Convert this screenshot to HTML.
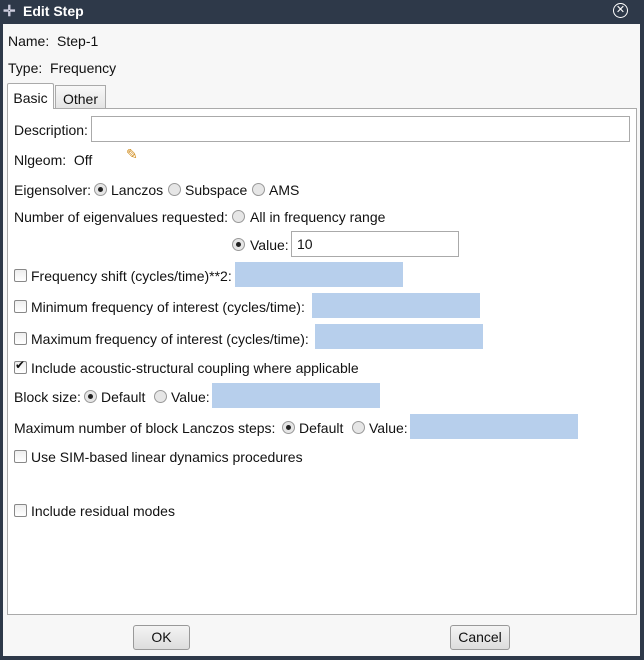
<!DOCTYPE html>
<html><head><style>
body{margin:0;width:644px;height:660px;background:#2e3949;font-family:"Liberation Sans",sans-serif;font-size:14px;color:#111;position:relative;overflow:hidden}
.a{position:absolute;white-space:nowrap}
#win{position:absolute;left:3px;top:24px;width:637px;height:632px;background:#f7f7f7}
.f{position:absolute;background:#b7cfec;height:25px}
.cb{position:absolute;width:11px;height:11px;border:1px solid #888;background:linear-gradient(#eee,#fff);border-radius:2px}
.rb{position:absolute;width:11px;height:11px;border:1px solid #999;border-radius:50%;background:#e6e6e6}
.rb.on::after{content:"";position:absolute;left:3px;top:3px;width:5px;height:5px;border-radius:50%;background:#222}
.btn{position:absolute;height:23px;border:1px solid #999;border-radius:3px;background:linear-gradient(#f4f4f4,#ddd);text-align:center;line-height:23px;font-size:14px}
</style></head><body>
<div class="a" style="left:3px;top:2px;color:#ccd;font-size:15px;font-weight:bold">✛</div>
<div class="a" style="left:23px;top:3px;color:#fff;font-size:14px;font-weight:bold">Edit Step</div>
<div class="a" style="left:613px;top:3px;width:13px;height:13px;border:1.5px solid #fff;border-radius:50%;color:#fff;font-size:11px;line-height:13px;text-align:center">✕</div>
<div id="win"></div>
<div class="a" style="left:8px;top:33px">Name:&nbsp; Step-1</div>
<div class="a" style="left:8px;top:60px">Type:&nbsp; Frequency</div>
<div class="a" style="left:7px;top:108px;width:628px;height:505px;background:#fff;border:1px solid #aaa"></div>
<div class="a" style="left:7px;top:83px;width:47px;height:26px;background:#fff;border:1px solid #aaa;border-bottom:none;border-radius:2px 2px 0 0;padding:6px 0 0 0;box-sizing:border-box;text-align:center">Basic</div>
<div class="a" style="left:55px;top:85px;width:51px;height:23px;background:linear-gradient(#f8f8f8,#e4e4e4);border:1px solid #aaa;border-bottom:none;box-sizing:border-box;padding-top:5px;text-align:center">Other</div>
<div class="a" style="left:14px;top:122px">Description:</div>
<div class="a" style="left:91px;top:116px;width:537px;height:24px;border:1px solid #aaa;background:#fff"></div>
<div class="a" style="left:14px;top:152px">Nlgeom:&nbsp; Off</div>
<div class="a" style="left:126px;top:146px;color:#d08b1a;font-size:14px">✎</div>
<div class="a" style="left:14px;top:182px">Eigensolver:</div>
<div class="rb on" style="left:94px;top:183px"></div><div class="a" style="left:111px;top:182px">Lanczos</div>
<div class="rb" style="left:168px;top:183px"></div><div class="a" style="left:185px;top:182px">Subspace</div>
<div class="rb" style="left:252px;top:183px"></div><div class="a" style="left:269px;top:182px">AMS</div>
<div class="a" style="left:14px;top:209px">Number of eigenvalues requested:</div>
<div class="rb" style="left:232px;top:210px"></div><div class="a" style="left:250px;top:209px">All in frequency range</div>
<div class="rb on" style="left:232px;top:238px"></div><div class="a" style="left:250px;top:237px">Value:</div>
<div class="a" style="left:291px;top:231px;width:168px;height:26px;border:1px solid #aaa;background:#fff;line-height:25px;padding-left:5px;box-sizing:border-box">10</div>
<div class="cb" style="left:14px;top:269px"></div><div class="a" style="left:31px;top:268px">Frequency shift (cycles/time)**2:</div>
<div class="f" style="left:235px;top:262px;width:168px"></div>
<div class="cb" style="left:14px;top:300px"></div><div class="a" style="left:31px;top:299px">Minimum frequency of interest (cycles/time):</div>
<div class="f" style="left:312px;top:293px;width:168px"></div>
<div class="cb" style="left:14px;top:332px"></div><div class="a" style="left:31px;top:331px">Maximum frequency of interest (cycles/time):</div>
<div class="f" style="left:315px;top:324px;width:168px"></div>
<div class="cb" style="left:14px;top:361px"></div><div class="a" style="left:15px;top:358px;font-size:12px">✔</div><div class="a" style="left:31px;top:360px">Include acoustic-structural coupling where applicable</div>
<div class="a" style="left:14px;top:389px">Block size:</div>
<div class="rb on" style="left:84px;top:390px"></div><div class="a" style="left:101px;top:389px">Default</div>
<div class="rb" style="left:154px;top:390px"></div><div class="a" style="left:171px;top:389px">Value:</div>
<div class="f" style="left:212px;top:383px;width:168px"></div>
<div class="a" style="left:14px;top:420px">Maximum number of block Lanczos steps:</div>
<div class="rb on" style="left:282px;top:421px"></div><div class="a" style="left:299px;top:420px">Default</div>
<div class="rb" style="left:352px;top:421px"></div><div class="a" style="left:369px;top:420px">Value:</div>
<div class="f" style="left:410px;top:414px;width:168px"></div>
<div class="cb" style="left:14px;top:450px"></div><div class="a" style="left:31px;top:449px">Use SIM-based linear dynamics procedures</div>
<div class="cb" style="left:14px;top:504px"></div><div class="a" style="left:31px;top:503px">Include residual modes</div>
<div class="btn" style="left:133px;top:625px;width:55px">OK</div>
<div class="btn" style="left:450px;top:625px;width:58px">Cancel</div>
</body></html>
